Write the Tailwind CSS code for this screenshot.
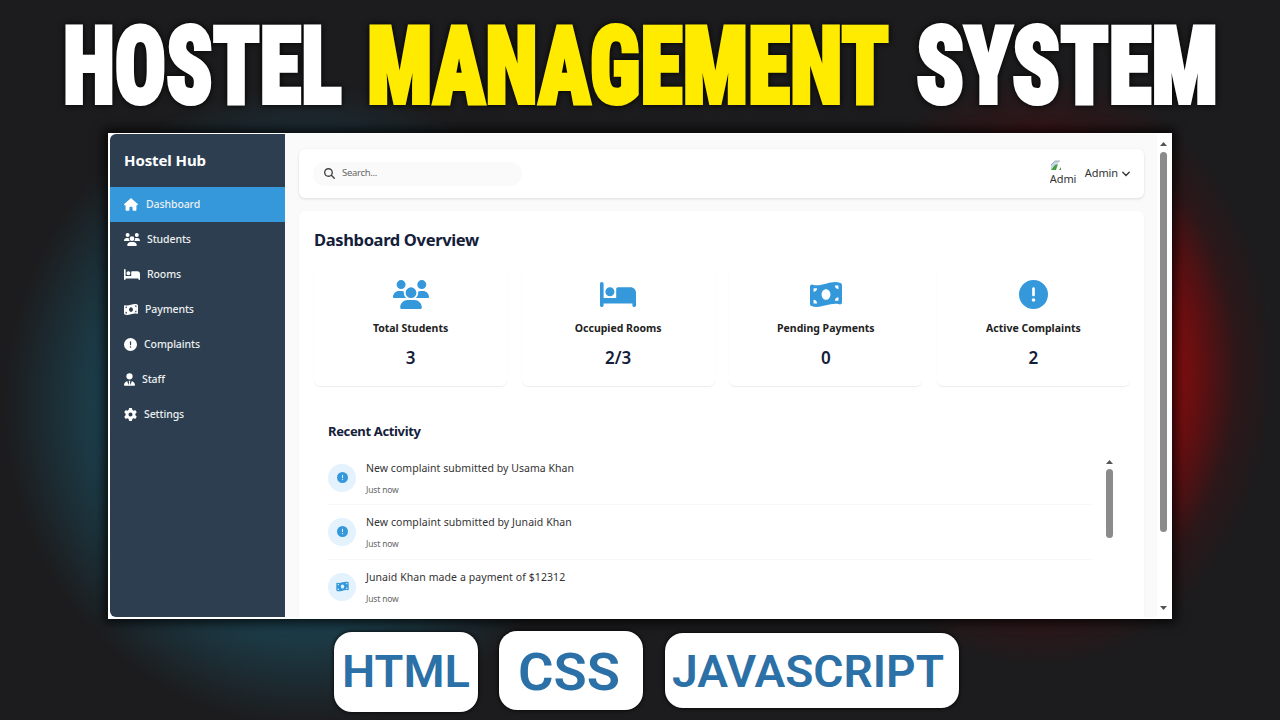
<!DOCTYPE html>
<html lang="en">
<head>
  <meta charset="utf-8" />
  <meta name="viewport" content="width=device-width, initial-scale=1" />
  <title>Hostel Management System</title>
  <script src="https://cdn.jsdelivr.net/npm/@tailwindcss/browser@4"></script>
</head>
<body class="w-[1280px] h-[720px] overflow-hidden bg-[#1c1c1e] font-['Noto_Sans','Open_Sans',sans-serif]">

  <!-- icon set -->
  <svg class="hidden">
    <symbol id="house" viewBox="0 0 576 512"><path d="M575.8 255.500c0 18-15 32.100-32 32.100h-32l.7 160.200c0 2.700-.2 5.400-.5 8.100V472c0 22.100-17.900 40-40 40H392c-22.100 0-40-17.900-40-40V384c0-17.700-14.300-32-32-32H256c-17.700 0-32 14.300-32 32v88c0 22.100-17.900 40-40 40H104c-22.100 0-40-17.900-40-40V287.600H32c-18 0-32-14-32-32.100c0-9 3-17 10-24L266.400 8c7-7 15-8 22-8s15 2 21 7L564.800 231.500c8 7 12 15 11 24z"/></symbol>
    <symbol id="users" viewBox="0 0 640 512"><path d="M144 0a80 80 0 1 1 0 160A80 80 0 1 1 144 0zM512 0a80 80 0 1 1 0 160A80 80 0 1 1 512 0zM0 298.700C0 239.800 47.800 192 106.700 192h42.700c15.900 0 31 3.500 44.600 9.700c-1.300 7.200-1.900 14.700-1.900 22.300c0 38.200 16.800 72.500 43.300 96H21.300C9.600 320 0 310.400 0 298.700zM404.600 320c26.600-23.500 43.300-57.800 43.300-96c0-7.600-.7-15-1.900-22.300c13.600-6.300 28.700-9.700 44.600-9.700h42.700C592.200 192 640 239.800 640 298.700c0 11.800-9.600 21.300-21.300 21.300zM224 224a96 96 0 1 1 192 0 96 96 0 1 1 -192 0zM128 485.300C128 411.700 187.700 352 261.300 352H378.700C452.300 352 512 411.700 512 485.300c0 14.700-11.900 26.700-26.700 26.700H154.700c-14.700 0-26.700-11.900-26.700-26.700z"/></symbol>
    <symbol id="bed" viewBox="0 0 640 512"><path d="M32 32c17.700 0 32 14.300 32 32V320H288V160c0-17.700 14.300-32 32-32H544c53 0 96 43 96 96V448c0 17.700-14.300 32-32 32s-32-14.300-32-32V416H64v32c0 17.700-14.300 32-32 32s-32-14.300-32-32V64C0 46.300 14.300 32 32 32zm144 96a80 80 0 1 1 0 160 80 80 0 1 1 0-160z"/></symbol>
    <symbol id="money" viewBox="0 0 576 512"><path d="M0 112.500V422.300c0 18 10.100 35 27 41.300c87 32.500 174 10.300 261-11.900c79.800-20.300 159.600-40.700 239.300-18.900c23 6.300 48.700-9.500 48.700-33.400V89.700c0-18-10.100-35-27-41.300C462 15.900 375 38.100 288 60.300C208.200 80.600 128.400 100.900 48.700 79.100C25.600 72.800 0 88.600 0 112.500zM288 352c-44.200 0-80-43-80-96s35.800-96 80-96s80 43 80 96s-35.800 96-80 96zM64 352c35.300 0 64 28.700 64 64H64V352zm64-208c0 35.300-28.700 64-64 64V144h64zM512 304v64H448c0-35.300 28.700-64 64-64zM448 96h64v64c-35.300 0-64-28.700-64-64z"/></symbol>
    <symbol id="alert" viewBox="0 0 512 512"><path d="M256 512A256 256 0 1 0 256 0a256 256 0 1 0 0 512zm0-384c13.300 0 24 10.700 24 24V264c0 13.300-10.700 24-24 24s-24-10.700-24-24V152c0-13.300 10.700-24 24-24zM224 352a32 32 0 1 1 64 0 32 32 0 1 1 -64 0z"/></symbol>
    <symbol id="tie" viewBox="0 0 448 512"><path d="M96 128a128 128 0 1 0 256 0A128 128 0 1 0 96 128zm94.500 200.200l18.600 31L175.800 483.100l-36-146.900c-2-8.100-9.800-13.400-17.900-11.300C51.900 342.400 0 405.800 0 481.300c0 17 13.800 30.700 30.700 30.700H417.300c17 0 30.700-13.800 30.700-30.700c0-75.500-51.900-138.900-121.900-156.400c-8.100-2-15.900 3.300-17.900 11.300l-36 146.900L238.900 359.200l18.600-31c6.400-10.700-1.300-24.200-13.700-24.200H204.300c-12.400 0-20.100 13.600-13.700 24.200z"/></symbol>
    <symbol id="gear" viewBox="0 0 512 512"><path d="M495.900 166.600c3.200 8.700 .5 18.400-6.400 24.600l-43.300 39.400c1.100 8.300 1.700 16.800 1.700 25.400s-.6 17.100-1.700 25.400l43.300 39.400c6.900 6.200 9.600 15.900 6.400 24.600c-4.400 11.900-9.700 23.300-15.800 34.300l-4.700 8.100c-6.600 11-14 21.400-22.100 31.200c-5.900 7.200-15.700 9.600-24.500 6.800l-55.700-17.700c-13.400 10.300-28.200 18.900-44 25.400l-12.500 57.100c-2 9.100-9 16.300-18.200 17.800c-13.800 2.300-28 3.500-42.500 3.500s-28.700-1.200-42.500-3.500c-9.200-1.500-16.200-8.700-18.200-17.800l-12.500-57.100c-15.800-6.500-30.600-15.100-44-25.400L83.100 425.900c-8.800 2.800-18.600 .3-24.500-6.800c-8.100-9.800-15.500-20.200-22.100-31.200l-4.700-8.100c-6.100-11-11.400-22.400-15.800-34.300c-3.200-8.700-.5-18.400 6.400-24.600l43.300-39.400C64.600 273.100 64 264.600 64 256s.6-17.100 1.700-25.400L22.400 191.200c-6.900-6.200-9.600-15.900-6.400-24.600c4.400-11.900 9.700-23.300 15.800-34.300l4.700-8.100c6.600-11 14-21.400 22.100-31.200c5.900-7.200 15.700-9.600 24.500-6.800l55.700 17.700c13.400-10.300 28.200-18.900 44-25.400l12.500-57.100c2-9.100 9-16.300 18.200-17.800C227.300 1.200 241.500 0 256 0s28.700 1.200 42.500 3.500c9.200 1.500 16.200 8.700 18.200 17.800l12.500 57.100c15.800 6.500 30.600 15.100 44 25.400l55.700-17.700c8.800-2.800 18.600-.3 24.500 6.800c8.100 9.800 15.500 20.200 22.100 31.200l4.700 8.100c6.100 11 11.400 22.400 15.800 34.300zM256 336a80 80 0 1 0 0-160 80 80 0 1 0 0 160z"/></symbol>
    <symbol id="search" viewBox="0 0 512 512"><path d="M416 208c0 45.900-14.900 88.300-40 122.700L502.600 457.400c12.500 12.500 12.500 32.800 0 45.300s-32.800 12.500-45.300 0L330.700 376c-34.400 25.200-76.800 40-122.700 40C93.100 416 0 322.900 0 208S93.100 0 208 0S416 93.100 416 208zM208 352a144 144 0 1 0 0-288 144 144 0 1 0 0 288z"/></symbol>
  </svg>

  <div class="w-full h-full flex flex-col items-center bg-[radial-gradient(ellipse_300px_320px_at_305px_405px,#1b5466_0%,#1b4d5e_55%,#1c323b_80%,transparent_100%),radial-gradient(ellipse_235px_300px_at_1040px_370px,#a80e0e_0%,#8c0d0d_55%,#5a1012_70%,#2c1719_84%,transparent_100%)]">

    <h1 class="h-[133px] shrink-0">
      <svg width="1280" height="133" class="block overflow-visible font-['Roboto','Open_Sans',sans-serif] font-black drop-shadow-[0_0_3px_#000]" style="font-stretch: 75%" font-size="107" stroke-width="4">
        <text x="63" y="103" textLength="279" lengthAdjust="spacingAndGlyphs" fill="#fff" stroke="#fff">HOSTEL</text>
        <text x="367" y="103" textLength="522" lengthAdjust="spacingAndGlyphs" fill="#ffeb00" stroke="#ffeb00">MANAGEMENT</text>
        <text x="916" y="103" textLength="302" lengthAdjust="spacingAndGlyphs" fill="#fff" stroke="#fff">SYSTEM</text>
      </svg>
    </h1>

    <!-- app window -->
    <div class="w-[1064px] h-[486px] shrink-0 bg-white flex pl-0.5 pt-px pb-0.5 overflow-hidden shadow-[0_0_10px_4px_rgba(0,0,0,0.75)]">
      <aside class="w-[175px] h-full bg-[#2c3e50] rounded-l-md text-white overflow-hidden">
        <div class="h-[53px] flex items-center pl-3.5 text-[15px] font-bold tracking-[-0.1px]">Hostel Hub</div>
        <nav class="text-[10.500px] font-medium tracking-[-0.1px] text-[#ecf0f1]">
          <a class="h-[35px] flex items-center gap-2 pl-3.5 bg-[#3498db]"><svg class="w-[14px] h-[13px] fill-white"><use href="#house"/></svg>Dashboard</a>
          <a class="h-[35px] flex items-center gap-[7px] pl-3.5"><svg class="w-4 h-[13px] fill-white"><use href="#users"/></svg>Students</a>
          <a class="h-[35px] flex items-center gap-[7px] pl-3.5"><svg class="w-4 h-[13px] fill-white"><use href="#bed"/></svg>Rooms</a>
          <a class="h-[35px] flex items-center gap-[7px] pl-3.5"><svg class="w-[14px] h-[13px] fill-white"><use href="#money"/></svg>Payments</a>
          <a class="h-[35px] flex items-center gap-[7px] pl-3.5"><svg class="w-[13px] h-[13px] fill-white"><use href="#alert"/></svg>Complaints</a>
          <a class="h-[35px] flex items-center gap-[7px] pl-3.5"><svg class="w-[11px] h-[13px] fill-white"><use href="#tie"/></svg>Staff</a>
          <a class="h-[35px] flex items-center gap-[7px] pl-3.5"><svg class="w-[13px] h-[13px] fill-white"><use href="#gear"/></svg>Settings</a>
        </nav>
      </aside>

      <main class="w-[872px] h-full bg-[#fafafa] pl-3.5 pr-[13px] pt-[15px] overflow-hidden">
        <header class="h-[49px] bg-white rounded-md shadow-[0_1px_3px_rgba(0,0,0,0.12)] flex items-center justify-between px-3.5">
          <div class="w-[209px] h-6 rounded-full bg-[#fafafa] flex items-center gap-[7px] pl-[11px] text-[9.500px] tracking-[-0.3px] text-[#666]">
            <svg class="w-[11px] h-[11px] fill-[#444]"><use href="#search"/></svg>Search...
          </div>
          <div class="flex items-center text-[11px] tracking-[-0.1px] text-[#333]">
            <div class="w-[27px] h-[27px] overflow-hidden mr-2">
              <svg class="w-[13px] h-[12px]" viewBox="0 0 13 12"><path d="M1 10V5l4-4h5L1 10z" fill="#c5d5ea"/><path d="M1 10l4-5 3-1-2 6H1zM9 10l2-3v3H9z" fill="#45a043"/><path d="M1 5l4-4h5" fill="none" stroke="#8a9098" stroke-width=".7"/></svg>
              <div class="leading-[14px]">Admi</div>
            </div>
            Admin
            <svg class="w-2 h-[6px] ml-1" viewBox="0 0 8 6"><path d="M.8 1.200 4 4.500 7.200 1.200" fill="none" stroke="#333" stroke-width="1.300" stroke-linecap="round"/></svg>
          </div>
        </header>

        <section class="mt-[13px] h-[420px] bg-white rounded-md shadow-[0_1px_3px_rgba(0,0,0,0.05)] pl-[15px] pr-3.5 pt-[17px]">
          <h2 class="text-[16.500px] leading-6 font-bold tracking-[-0.35px] text-[#14203a]">Dashboard Overview</h2>
          <div class="mt-[11px] grid grid-cols-4 gap-[14.500px] text-center">
            <div class="h-[123px] rounded-md shadow-[0_1px_1px_rgba(0,0,0,0.08)] flex flex-col items-center pt-[17px]">
              <svg class="w-9 h-[29px] fill-[#3498db]"><use href="#users"/></svg>
              <h3 class="mt-[11px] text-[10.500px] leading-4 font-bold text-[#222]">Total Students</h3>
              <p class="mt-[10px] text-[17px] leading-6 font-semibold text-[#14203a]">3</p>
            </div>
            <div class="h-[123px] rounded-md shadow-[0_1px_1px_rgba(0,0,0,0.08)] flex flex-col items-center pt-[17px]">
              <svg class="w-9 h-[29px] fill-[#3498db]"><use href="#bed"/></svg>
              <h3 class="mt-[11px] text-[10.500px] leading-4 font-bold text-[#222]">Occupied Rooms</h3>
              <p class="mt-[10px] text-[17px] leading-6 font-semibold text-[#14203a]">2/3</p>
            </div>
            <div class="h-[123px] rounded-md shadow-[0_1px_1px_rgba(0,0,0,0.08)] flex flex-col items-center pt-[17px]">
              <svg class="w-8 h-[29px] fill-[#3498db]"><use href="#money"/></svg>
              <h3 class="mt-[11px] text-[10.500px] leading-4 font-bold text-[#222]">Pending Payments</h3>
              <p class="mt-[10px] text-[17px] leading-6 font-semibold text-[#14203a]">0</p>
            </div>
            <div class="h-[123px] rounded-md shadow-[0_1px_1px_rgba(0,0,0,0.08)] flex flex-col items-center pt-[17px]">
              <svg class="w-[29px] h-[29px] fill-[#3498db]"><use href="#alert"/></svg>
              <h3 class="mt-[11px] text-[10.500px] leading-4 font-bold text-[#222]">Active Complaints</h3>
              <p class="mt-[10px] text-[17px] leading-6 font-semibold text-[#14203a]">2</p>
            </div>
          </div>

          <div class="mt-[35px] px-3.5">
            <h3 class="text-[13px] leading-5 font-bold tracking-[-0.35px] text-[#14203a]">Recent Activity</h3>
            <div class="mt-[10px] flex justify-between">
              <ul class="w-[766px] text-[#333]">
                <li class="h-[54.300px] flex items-center gap-[10px] border-b border-[#f8f8f8]">
                  <span class="w-7 h-7 rounded-full bg-[#e3f2fd] flex items-center justify-center"><svg class="w-[11px] h-[11px] fill-[#3498db]"><use href="#alert"/></svg></span>
                  <div class="pt-px"><p class="text-[10.500px] leading-4 tracking-[0.040px]">New complaint submitted by Usama Khan</p><p class="mt-[7px] text-[8.500px] leading-3.5 tracking-[-0.15px] text-[#666]">Just now</p></div>
                </li>
                <li class="h-[54.300px] flex items-center gap-[10px] border-b border-[#f8f8f8]">
                  <span class="w-7 h-7 rounded-full bg-[#e3f2fd] flex items-center justify-center"><svg class="w-[11px] h-[11px] fill-[#3498db]"><use href="#alert"/></svg></span>
                  <div class="pt-0.5"><p class="text-[10.500px] leading-4 tracking-[0.070px]">New complaint submitted by Junaid Khan</p><p class="mt-[7px] text-[8.500px] leading-3.5 tracking-[-0.15px] text-[#666]">Just now</p></div>
                </li>
                <li class="h-[54.300px] flex items-center gap-[10px]">
                  <span class="w-7 h-7 rounded-full bg-[#e3f2fd] flex items-center justify-center"><svg class="w-[13px] h-[11px] fill-[#3498db]"><use href="#money"/></svg></span>
                  <div class="pt-px"><p class="text-[10.500px] leading-4 tracking-[0.080px]">Junaid Khan made a payment of $12312</p><p class="mt-[7px] text-[8.500px] leading-3.5 tracking-[-0.15px] text-[#666]">Just now</p></div>
                </li>
              </ul>
              <div class="w-2 mr-[3px] pt-[9px] flex flex-col items-center">
                <svg class="w-[7px] h-1 shrink-0" viewBox="0 0 7 4"><path d="M0 4 3.500 0 7 4z" fill="#555"/></svg>
                <div class="mt-[5px] w-[7px] h-[69px] rounded-full bg-[#8b8b8b]"></div>
              </div>
            </div>
          </div>
        </section>
      </main>

      <!-- page scrollbar -->
      <div class="w-[13px] h-full flex flex-col items-center pt-2 pb-[7px]">
        <svg class="w-[7px] h-1 shrink-0" viewBox="0 0 7 4"><path d="M0 4 3.500 0 7 4z" fill="#555"/></svg>
        <div class="mt-1.5 w-[7px] h-[380px] shrink-0 rounded-full bg-[#8b8b8b]"></div>
        <svg class="w-[7px] h-1 shrink-0 mt-auto" viewBox="0 0 7 4"><path d="M0 0 3.500 4 7 0z" fill="#555"/></svg>
      </div>
    </div>

    <!-- tech badges -->
    <div class="w-full pl-[334px] pt-3 flex items-start font-['Roboto','Open_Sans',sans-serif] font-semibold">
      <svg class="w-[144px] h-20 mt-[1px] bg-white rounded-[18px] shadow-[0_0_4px_#000]" font-size="45" fill="#2b70a6">
        <text x="8" y="55" textLength="128" lengthAdjust="spacingAndGlyphs">HTML</text>
      </svg>
      <svg class="w-[144px] h-[79px] ml-[21px] bg-white rounded-[18px] shadow-[0_0_4px_#000]" font-size="52" fill="#2b70a6">
        <text x="19" y="59" textLength="102" lengthAdjust="spacingAndGlyphs">CSS</text>
      </svg>
      <svg class="w-[294px] h-[75px] ml-[22px] mt-0.5 bg-white rounded-[18px] shadow-[0_0_4px_#000]" font-size="45" fill="#2b70a6">
        <text x="7" y="54" textLength="272" lengthAdjust="spacingAndGlyphs">JAVASCRIPT</text>
      </svg>
    </div>
  </div>
</body>
</html>
